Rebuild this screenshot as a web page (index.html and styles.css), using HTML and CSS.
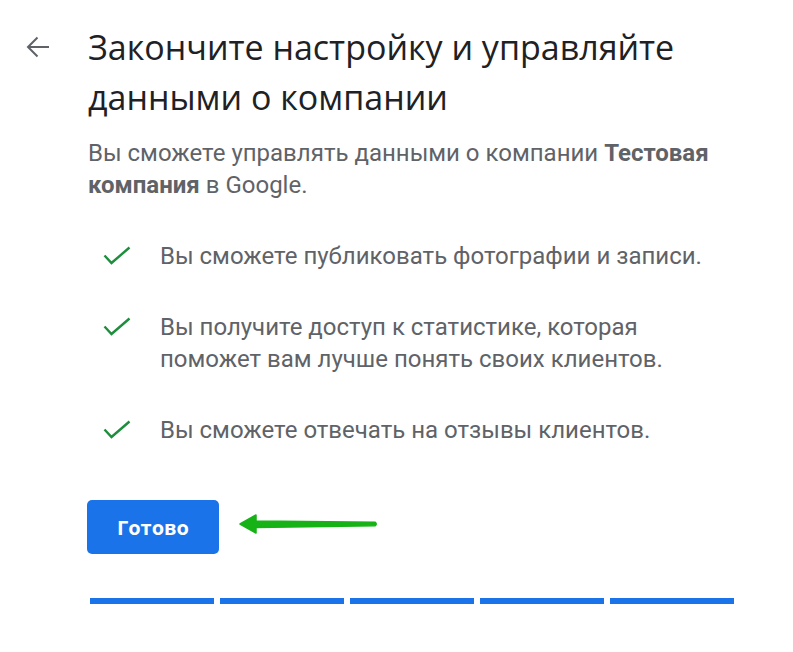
FILE: index.html
```html
<!DOCTYPE html>
<html lang="ru">
<head>
<meta charset="utf-8">
<link rel="stylesheet" href="styles.css">
</head>
<body>
<div class="page">
  <header class="header">
    <svg class="back" width="24" height="22" viewBox="0 0 24 22" aria-hidden="true">
      <path d="M23 11H2M11.5 1.5L2 11l9.5 9.5" fill="none" stroke="#5f6368" stroke-width="2"/>
    </svg>
    <h1 class="title">Закончите настройку и управляйте данными о компании</h1>
  </header>
  <main class="content">
    <p class="lead">Вы сможете управлять данными о компании <b>Тестовая компания</b> в Google.</p>
    <ul class="benefits">
      <li class="benefit">
        <svg class="check" width="28" height="20" viewBox="0 0 28 20" aria-hidden="true"><polyline points="1.5,9.5 8.5,17 26.5,1.5" fill="none" stroke="#1e8e3e" stroke-width="2.4"/></svg>
        <span class="benefit-text">Вы сможете публиковать фотографии и записи.</span>
      </li>
      <li class="benefit">
        <svg class="check" width="28" height="20" viewBox="0 0 28 20" aria-hidden="true"><polyline points="1.5,9.5 8.5,17 26.5,1.5" fill="none" stroke="#1e8e3e" stroke-width="2.4"/></svg>
        <span class="benefit-text benefit-text--narrow">Вы получите доступ к статистике, которая поможет вам лучше понять своих клиентов.</span>
      </li>
      <li class="benefit">
        <svg class="check" width="28" height="20" viewBox="0 0 28 20" aria-hidden="true"><polyline points="1.5,9.5 8.5,17 26.5,1.5" fill="none" stroke="#1e8e3e" stroke-width="2.4"/></svg>
        <span class="benefit-text">Вы сможете отвечать на отзывы клиентов.</span>
      </li>
    </ul>
    <div class="actions">
      <button class="btn-primary">Готово</button>
      <svg class="pointer" width="140" height="24" viewBox="0 0 140 24" aria-hidden="true">
        <path d="M1 12 L17 3 L17 9 L136 10.2 Q138.5 12 136 13.8 L17 15.5 L17 21 Z" fill="#16b216" stroke="#16b216" stroke-width="1.5" stroke-linejoin="round"/>
      </svg>
    </div>
    <div class="progress">
      <span class="seg"></span><span class="seg"></span><span class="seg"></span><span class="seg"></span><span class="seg"></span>
    </div>
  </main>
</div>
</body>
</html>
```
FILE: styles.css
```css
html, body {
  margin: 0;
  background: #ffffff;
}
.page {
  padding: 22px 0 0 26px;
}
.header {
  display: flex;
  align-items: flex-start;
  gap: 38px;
}
.back {
  margin-top: 14px;
  flex: none;
}
.title {
  margin: 0;
  font-family: "Open Sans", sans-serif;
  font-weight: 400;
  font-size: 34px;
  line-height: 50px;
  color: #202124;
  width: 640px;
}
.content {
  padding-left: 62px;
}
.lead {
  margin: 15px 0 0;
  font-family: Roboto, "Noto Sans", sans-serif;
  font-size: 24px;
  line-height: 32px;
  color: #5f6368;
  width: 650px;
}
.lead b {
  font-weight: 700;
  color: #5f6368;
}
.benefits {
  list-style: none;
  margin: 39px 0 0;
  padding: 0 0 0 15px;
  display: flex;
  flex-direction: column;
  gap: 39px;
}
.benefit {
  display: flex;
  align-items: flex-start;
  gap: 29px;
}
.check {
  flex: none;
  margin-top: 6px;
}
.benefit-text {
  font-family: Roboto, "Noto Sans", sans-serif;
  font-size: 24px;
  line-height: 32px;
  color: #5f6368;
  max-width: 580px;
}
.benefit-text--narrow {
  max-width: 515px;
}
.actions {
  margin-top: 54px;
  display: flex;
  align-items: center;
  gap: 20px;
}
.btn-primary {
  margin-left: -1px;
  width: 132px;
  height: 54px;
  border: none;
  border-radius: 5px;
  background: #1a73e8;
  color: #ffffff;
  font-family: "Open Sans", sans-serif;
  font-weight: 700;
  font-size: 20px;
  cursor: pointer;
}
.pointer {
  margin-top: -6px;
}
.progress {
  margin: 44px 0 0 2px;
  display: flex;
  gap: 6px;
}
.seg {
  width: 124px;
  height: 6px;
  background: #1a73e8;
}
```
